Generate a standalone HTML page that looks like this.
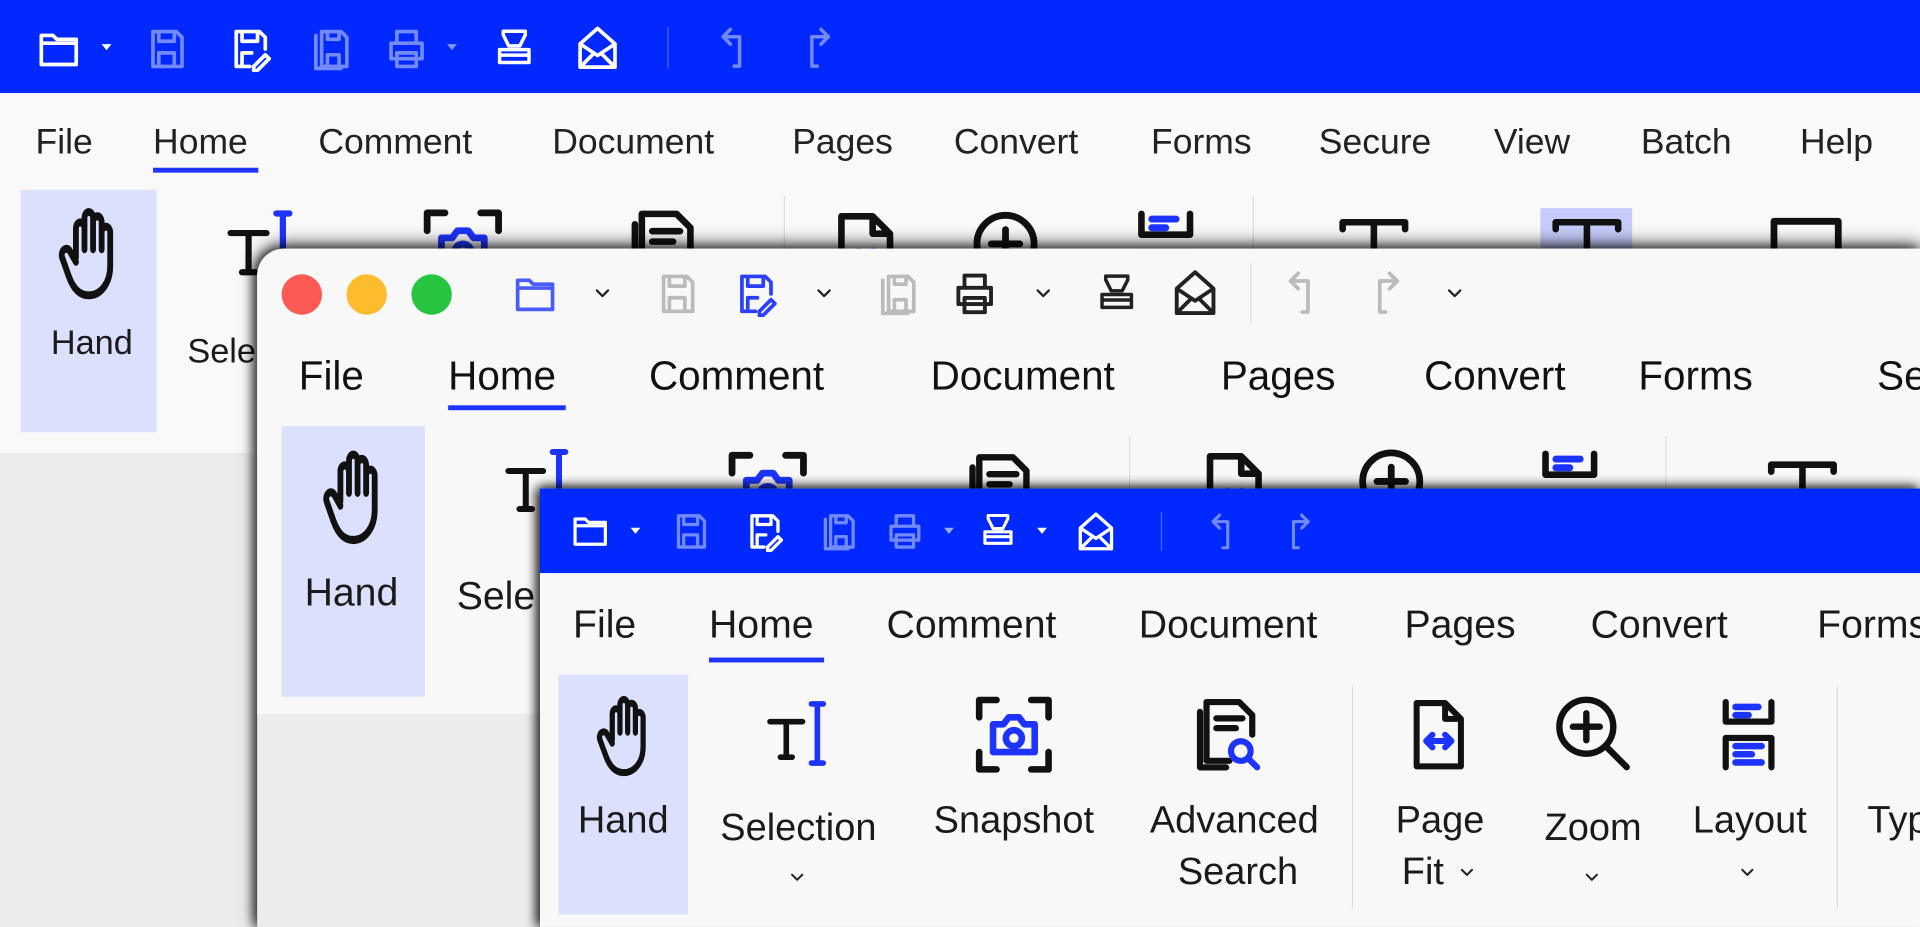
<!DOCTYPE html>
<html><head><meta charset="utf-8"><style>
html,body{margin:0;padding:0;width:1920px;height:927px;overflow:hidden;background:#ebebeb}
#s{position:absolute;left:0;top:0;width:1568px;height:757px;overflow:hidden;transform:scale(1.22449);transform-origin:0 0;font-family:"Liberation Sans",sans-serif;color:#1a1a1a}
.a{position:absolute}
.t{position:absolute;white-space:nowrap;transform:translateY(-50%)}
.c{position:absolute;white-space:nowrap;transform:translate(-50%,-50%)}
svg.i{position:absolute;fill:none;stroke:currentColor;stroke-width:1.9;stroke-linecap:round;stroke-linejoin:round;overflow:visible}
</style></head><body>
<svg width="0" height="0" style="position:absolute">
<defs>
<symbol id="folder" viewBox="0 0 24 24"><path d="M3 5h6l2 2h10v13H3z M3 9h18"/></symbol>
<symbol id="save" viewBox="0 0 24 24"><path d="M5 3h12l3 3v15H5z M8 3v5h8V3 M8 21v-7h8v7"/></symbol>
<symbol id="saveas" viewBox="0 0 24 24"><path d="M5 3h12l3 3v6 M12 21H5V3 M8 3v5h8V3 M8 21v-7h5"/><path d="M14 21l6-6 2 2-6 6h-2z"/></symbol>
<symbol id="saveall" viewBox="0 0 24 24"><path d="M8 3h10l3 3v15H8z M11 3v4h6V3 M11 21v-6h6v6 M5 5v17h13"/></symbol>
<symbol id="print" viewBox="0 0 24 24"><path d="M7 9V3h10v6 M4 9h16v8H4z M7 14h10v7H7z"/></symbol>
<symbol id="scan" viewBox="0 0 24 24"><path d="M6 3h12v2l-3 6H9L6 5z M4 13h16v7H4z M4 16h16"/></symbol>
<symbol id="mail" viewBox="0 0 24 24"><path d="M3 10l9-8 9 8v12H3z M3 10l9 6 9-6 M3 22l7-7 M21 22l-7-7"/></symbol>
<symbol id="undo" viewBox="0 0 24 24"><path d="M9 2 5 6l4 4 M5 6h9v16h-3"/></symbol>
<symbol id="redo" viewBox="0 0 24 24"><path d="M15 2l4 4-4 4 M19 6h-9v16h3"/></symbol>
<symbol id="chev" viewBox="0 0 24 24"><path d="M7 10l5 5 5-5"/></symbol>
<symbol id="hand" viewBox="0 0 24 24" preserveAspectRatio="none"><path d="M8 13V6a1.4 1.4 0 012.8 0v5V3.5a1.4 1.4 0 012.8 0V11V4.5a1.4 1.4 0 012.8 0V11V7a1.4 1.4 0 012.8 0v8c0 4-3 7-7 7-3 0-5-1.5-6.5-4.5L3.5 13a1.5 1.5 0 012.5-1.6L8 14"/></symbol>
<symbol id="tsel" viewBox="0 0 24 24"><path d="M2 8h11 M7.5 8v12 M5.5 20h4" stroke="#111"/><path d="M18 2v20 M16 2h4 M16 22h4" stroke="#1d33ff"/></symbol>
<symbol id="cam" viewBox="0 0 24 24"><path d="M2 7V2h5 M17 2h5v5 M22 17v5h-5 M7 22H2v-5" stroke="#111"/><path d="M6 9h3l1.5-2h3L15 9h3v8H6z" stroke="#1d33ff"/><circle cx="12" cy="13" r="2.3" stroke="#1d33ff"/></symbol>
<symbol id="dsrch" viewBox="0 0 24 24"><path d="M5 2h10l4 4v6 M5 2v18h7 M8 7h8 M8 10h6 M3 5v17h8" stroke="#111"/><circle cx="15.5" cy="17" r="3" stroke="#1d33ff"/><path d="M17.7 19.2 20.5 22" stroke="#1d33ff"/></symbol>
<symbol id="pfit" viewBox="0 0 24 24"><path d="M5 2h9l5 5v15H5z M14 2v5h5" stroke="#111"/><path d="M8 14h8 M8 14l2-2 M8 14l2 2 M16 14l-2-2 M16 14l-2 2" stroke="#1d33ff"/></symbol>
<symbol id="zoom" viewBox="0 0 24 24"><circle cx="10" cy="10" r="8"/><path d="M10 6v8 M6 10h8 M16 16l6 6"/></symbol>
<symbol id="layout" viewBox="0 0 24 24"><path d="M5 2v6h14V2 M5 22v-9h14v9" stroke="#111"/><path d="M8 3.5h7 M8 6h4 M8 15.5h8 M8 18h5 M8 20.5h8" stroke="#1d33ff" stroke-width="2"/></symbol>
<symbol id="ttool" viewBox="0 0 24 24"><path d="M3 5V3h18v2 M12 3v20"/></symbol>
<symbol id="tbox" viewBox="0 0 24 24"><path d="M3 22V3h18v19"/><path d="M12 12v10 M8 22h8" stroke="#1d33ff"/></symbol>
</defs></svg>
<div id="s">
<!-- WINDOW 1 -->
<div class="a" style="left:0;top:0;width:1568px;height:76px;background:#0028ff"></div>
<div class="a" style="left:0;top:76px;width:1568px;height:294px;background:#f9f9f9"></div>
<div style="color:#fff">
<svg class="i" style="left:28px;top:21px;width:40px;height:38px"><use href="#folder"/></svg>
<div class="a" style="left:83px;top:36px;border:4px solid transparent;border-top:5px solid #fff"></div>
<svg class="i" style="left:117px;top:21px;width:38px;height:38px;opacity:.45"><use href="#save"/></svg>
<svg class="i" style="left:185px;top:21px;width:38px;height:38px"><use href="#saveas"/></svg>
<svg class="i" style="left:250px;top:21px;width:38px;height:38px;opacity:.45"><use href="#saveall"/></svg>
<svg class="i" style="left:313px;top:21px;width:38px;height:38px;opacity:.45"><use href="#print"/></svg>
<div class="a" style="left:365px;top:36px;border:4px solid transparent;border-top:5px solid rgba(255,255,255,.5)"></div>
<svg class="i" style="left:401px;top:21px;width:38px;height:36px"><use href="#scan"/></svg>
<svg class="i" style="left:469px;top:20px;width:38px;height:38px"><use href="#mail"/></svg>
<div class="a" style="left:545px;top:22px;width:1px;height:34px;background:rgba(255,255,255,.3)"></div>
<svg class="i" style="left:583px;top:20px;width:36px;height:38px;opacity:.45"><use href="#undo"/></svg>
<svg class="i" style="left:648px;top:20px;width:36px;height:38px;opacity:.45"><use href="#redo"/></svg>
</div>
<div style="font-size:29px;color:#222">
<div class="t" style="left:29px;top:117px">File</div>
<div class="t" style="left:125px;top:117px">Home</div>
<div class="t" style="left:260px;top:117px">Comment</div>
<div class="t" style="left:451px;top:117px">Document</div>
<div class="t" style="left:647px;top:117px">Pages</div>
<div class="t" style="left:779px;top:117px">Convert</div>
<div class="t" style="left:940px;top:117px">Forms</div>
<div class="t" style="left:1077px;top:117px">Secure</div>
<div class="t" style="left:1220px;top:117px">View</div>
<div class="t" style="left:1340px;top:117px">Batch</div>
<div class="t" style="left:1470px;top:117px">Help</div>
</div>
<div class="a" style="left:125px;top:137px;width:86px;height:4px;background:#1d33ff"></div>
<div class="a" style="left:17px;top:155px;width:111px;height:198px;background:#dbe0fd"></div>
<svg class="i" style="left:42px;top:166px;width:60px;height:82px;color:#111"><use href="#hand"/></svg>
<div class="c" style="left:75px;top:280px;font-size:28px">Hand</div>
<div class="t" style="left:153px;top:287px;font-size:28px">Sele</div>
<svg class="i" style="left:183px;top:166px;width:64px;height:70px"><use href="#tsel"/></svg>
<svg class="i" style="left:340px;top:168px;width:76px;height:70px"><use href="#cam"/></svg>
<svg class="i" style="left:510px;top:168px;width:68px;height:70px"><use href="#dsrch"/></svg>
<div class="a" style="left:640px;top:160px;width:1px;height:45px;background:#ddd"></div>
<svg class="i" style="left:673px;top:170px;width:68px;height:70px"><use href="#pfit"/></svg>
<svg class="i" style="left:792px;top:170px;width:70px;height:70px;color:#111"><use href="#zoom"/></svg>
<svg class="i" style="left:918px;top:168px;width:68px;height:70px"><use href="#layout"/></svg>
<div class="a" style="left:1023px;top:160px;width:1px;height:45px;background:#ddd"></div>
<svg class="i" style="left:1088px;top:172px;width:68px;height:70px;color:#111"><use href="#ttool"/></svg>
<div class="a" style="left:1258px;top:170px;width:75px;height:60px;background:#c5ccfb"></div>
<svg class="i" style="left:1262px;top:172px;width:68px;height:70px;color:#111"><use href="#ttool"/></svg>
<svg class="i" style="left:1440px;top:172px;width:70px;height:70px;color:#111"><use href="#tbox"/></svg>

<!-- WINDOW 2 -->
<div class="a" style="left:210px;top:203px;width:1358px;height:554px;background:#ececec;border-radius:22px 0 0 0;box-shadow:0 -3px 14px rgba(0,0,0,.75),-3px 0 8px rgba(0,0,0,.6)"></div>
<div class="a" style="left:210px;top:203px;width:1358px;height:380px;background:#f8f8f8;border-radius:22px 0 0 0"></div>
<div class="a" style="left:230px;top:224px;width:33px;height:33px;border-radius:50%;background:#fb5a55"></div>
<div class="a" style="left:283px;top:224px;width:33px;height:33px;border-radius:50%;background:#fdbb2e"></div>
<div class="a" style="left:336px;top:224px;width:33px;height:33px;border-radius:50%;background:#27c43f"></div>
<svg class="i" style="left:415px;top:221px;width:44px;height:38px;color:#4a5cff"><use href="#folder"/></svg>
<svg class="i" style="left:481px;top:228px;width:22px;height:22px;color:#222;stroke-width:2"><use href="#chev"/></svg>
<svg class="i" style="left:533px;top:221px;width:40px;height:38px;color:#bbb"><use href="#save"/></svg>
<svg class="i" style="left:597px;top:221px;width:40px;height:38px;color:#2a3fff"><use href="#saveas"/></svg>
<svg class="i" style="left:662px;top:228px;width:22px;height:22px;color:#222;stroke-width:2"><use href="#chev"/></svg>
<svg class="i" style="left:712px;top:221px;width:40px;height:38px;color:#bbb"><use href="#saveall"/></svg>
<svg class="i" style="left:776px;top:220px;width:40px;height:40px;color:#222"><use href="#print"/></svg>
<svg class="i" style="left:841px;top:228px;width:22px;height:22px;color:#222;stroke-width:2"><use href="#chev"/></svg>
<svg class="i" style="left:892px;top:221px;width:40px;height:36px;color:#222"><use href="#scan"/></svg>
<svg class="i" style="left:956px;top:219px;width:40px;height:40px;color:#222"><use href="#mail"/></svg>
<div class="a" style="left:1021px;top:214px;width:1px;height:50px;background:#ddd"></div>
<svg class="i" style="left:1046px;top:219px;width:38px;height:40px;color:#bbb"><use href="#undo"/></svg>
<svg class="i" style="left:1111px;top:219px;width:38px;height:40px;color:#bbb"><use href="#redo"/></svg>
<svg class="i" style="left:1177px;top:228px;width:22px;height:22px;color:#222;stroke-width:2"><use href="#chev"/></svg>
<div style="font-size:33px;color:#111">
<div class="t" style="left:244px;top:307px">File</div>
<div class="t" style="left:366px;top:307px">Home</div>
<div class="t" style="left:530px;top:307px">Comment</div>
<div class="t" style="left:760px;top:307px">Document</div>
<div class="t" style="left:997px;top:307px">Pages</div>
<div class="t" style="left:1163px;top:307px">Convert</div>
<div class="t" style="left:1338px;top:307px">Forms</div>
<div class="t" style="left:1533px;top:307px">Secure</div>
</div>
<div class="a" style="left:366px;top:331px;width:96px;height:4px;background:#1d33ff"></div>
<div class="a" style="left:230px;top:348px;width:117px;height:221px;background:#dbe0fd"></div>
<svg class="i" style="left:258px;top:364px;width:60px;height:84px;color:#111"><use href="#hand"/></svg>
<div class="c" style="left:287px;top:484px;font-size:32px">Hand</div>
<div class="t" style="left:373px;top:487px;font-size:32px">Sele</div>
<svg class="i" style="left:410px;top:362px;width:62px;height:66px"><use href="#tsel"/></svg>
<svg class="i" style="left:588px;top:366px;width:78px;height:70px"><use href="#cam"/></svg>
<svg class="i" style="left:786px;top:366px;width:66px;height:70px"><use href="#dsrch"/></svg>
<div class="a" style="left:922px;top:356px;width:1px;height:50px;background:#ddd"></div>
<svg class="i" style="left:974px;top:366px;width:68px;height:70px"><use href="#pfit"/></svg>
<svg class="i" style="left:1107px;top:364px;width:70px;height:70px;color:#111"><use href="#zoom"/></svg>
<svg class="i" style="left:1248px;top:364px;width:68px;height:70px"><use href="#layout"/></svg>
<div class="a" style="left:1360px;top:356px;width:1px;height:50px;background:#ddd"></div>
<svg class="i" style="left:1438px;top:370px;width:68px;height:70px;color:#111"><use href="#ttool"/></svg>

<!-- WINDOW 3 -->
<div class="a" style="left:441px;top:399px;width:1127px;height:358px;background:#f8f8f8;box-shadow:-4px 0 8px rgba(0,0,0,.7),0 -3px 8px rgba(0,0,0,.6)"></div>
<div class="a" style="left:441px;top:399px;width:1127px;height:69px;background:#0028ff"></div>
<div style="color:#fff">
<svg class="i" style="left:465px;top:417px;width:34px;height:33px"><use href="#folder"/></svg>
<div class="a" style="left:515px;top:431px;border:4px solid transparent;border-top:5px solid #fff"></div>
<svg class="i" style="left:547px;top:417px;width:34px;height:34px;opacity:.45"><use href="#save"/></svg>
<svg class="i" style="left:607px;top:417px;width:34px;height:34px"><use href="#saveas"/></svg>
<svg class="i" style="left:667px;top:417px;width:34px;height:34px;opacity:.45"><use href="#saveall"/></svg>
<svg class="i" style="left:722px;top:417px;width:34px;height:34px;opacity:.45"><use href="#print"/></svg>
<div class="a" style="left:771px;top:431px;border:4px solid transparent;border-top:5px solid rgba(255,255,255,.6)"></div>
<svg class="i" style="left:798px;top:417px;width:34px;height:32px"><use href="#scan"/></svg>
<div class="a" style="left:847px;top:431px;border:4px solid transparent;border-top:5px solid #fff"></div>
<svg class="i" style="left:878px;top:416px;width:34px;height:36px"><use href="#mail"/></svg>
<div class="a" style="left:948px;top:418px;width:1px;height:32px;background:rgba(255,255,255,.3)"></div>
<svg class="i" style="left:984px;top:416px;width:32px;height:36px;opacity:.45"><use href="#undo"/></svg>
<svg class="i" style="left:1043px;top:416px;width:32px;height:36px;opacity:.45"><use href="#redo"/></svg>
</div>
<div style="font-size:32px;color:#1a1a1a">
<div class="t" style="left:468px;top:510px">File</div>
<div class="t" style="left:579px;top:510px">Home</div>
<div class="t" style="left:724px;top:510px">Comment</div>
<div class="t" style="left:930px;top:510px">Document</div>
<div class="t" style="left:1147px;top:510px">Pages</div>
<div class="t" style="left:1299px;top:510px">Convert</div>
<div class="t" style="left:1484px;top:510px">Forms</div>
</div>
<div class="a" style="left:579px;top:537px;width:94px;height:4px;background:#1d33ff"></div>
<div class="a" style="left:456px;top:551px;width:106px;height:196px;background:#dbe0fd"></div>
<svg class="i" style="left:482px;top:565px;width:54px;height:72px;color:#111"><use href="#hand"/></svg>
<div style="font-size:31px;color:#1a1a1a">
<div class="c" style="left:509px;top:670px">Hand</div>
<div class="c" style="left:652px;top:676px">Selection</div>
<div class="c" style="left:828px;top:670px">Snapshot</div>
<div class="c" style="left:1008px;top:670px">Advanced</div>
<div class="c" style="left:1011px;top:712px">Search</div>
<div class="c" style="left:1176px;top:670px">Page</div>
<div class="c" style="left:1162px;top:712px">Fit</div>
<div class="c" style="left:1301px;top:676px">Zoom</div>
<div class="c" style="left:1429px;top:670px">Layout</div>
<div class="t" style="left:1525px;top:670px">Typ</div>
</div>
<svg class="i" style="left:641px;top:706px;width:20px;height:20px;color:#222;stroke-width:2"><use href="#chev"/></svg>
<svg class="i" style="left:1188px;top:702px;width:20px;height:20px;color:#222;stroke-width:2"><use href="#chev"/></svg>
<svg class="i" style="left:1290px;top:706px;width:20px;height:20px;color:#222;stroke-width:2"><use href="#chev"/></svg>
<svg class="i" style="left:1417px;top:702px;width:20px;height:20px;color:#222;stroke-width:2"><use href="#chev"/></svg>
<svg class="i" style="left:624px;top:565px;width:58px;height:68px"><use href="#tsel"/></svg>
<svg class="i" style="left:793px;top:566px;width:70px;height:68px"><use href="#cam"/></svg>
<svg class="i" style="left:972px;top:566px;width:64px;height:68px"><use href="#dsrch"/></svg>
<div class="a" style="left:1104px;top:560px;width:1px;height:182px;background:#ddd"></div>
<svg class="i" style="left:1144px;top:566px;width:62px;height:68px"><use href="#pfit"/></svg>
<svg class="i" style="left:1268px;top:566px;width:66px;height:66px;color:#111"><use href="#zoom"/></svg>
<svg class="i" style="left:1396px;top:566px;width:64px;height:68px"><use href="#layout"/></svg>
<div class="a" style="left:1500px;top:560px;width:1px;height:182px;background:#ddd"></div>
</div>
</body></html>
